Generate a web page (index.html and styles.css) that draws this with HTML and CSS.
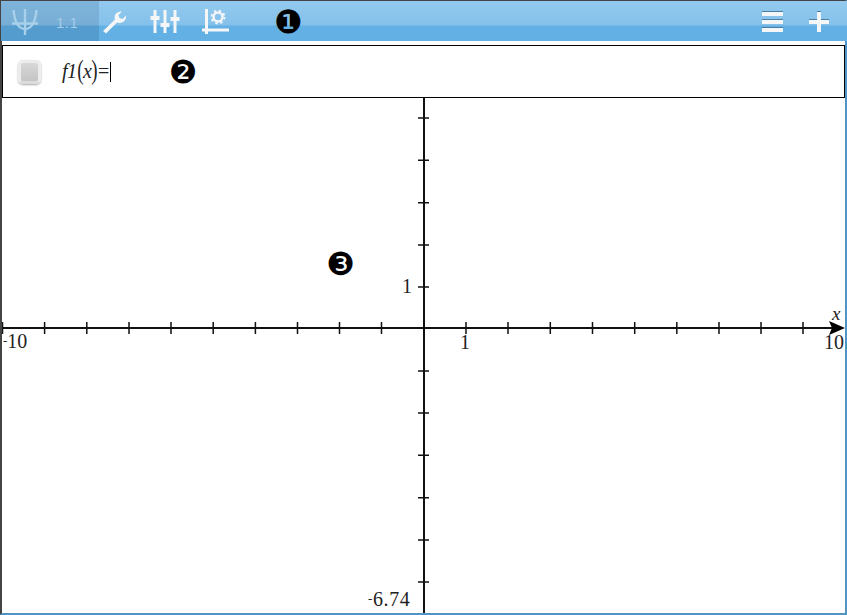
FILE: index.html
```html
<!DOCTYPE html>
<html lang="en">
<head>
<meta charset="utf-8">
<title>Graphs</title>
<link rel="stylesheet" href="styles.css">
</head>
<body>
<div class="app">
  <header class="toolbar">
    <div class="tab">
      <svg class="icon-graph" width="36" height="36" viewBox="0 0 36 36"><g fill="none" stroke="#a9d0ea" stroke-width="2.400"><path d="M6.500 6C7.500 16 11 25 18 25C25 25 28.500 16 29.500 6"/><path d="M18 5V31"/><path d="M5 19.500H31"/></g></svg>
      <span class="tab-label">1.1</span>
    </div>
    <div class="tools">
      <svg class="tool tool-wrench" width="28" height="28" viewBox="0 0 28 28"><path d="M3 24 15 12.500C13.500 8.500 16.500 4 22 4.500L18.500 8l1 3 3 1L26 8.500C26.500 14 22 17 17 15.500L6 26.500Z" fill="#f4f6f8"/></svg>
      <svg class="tool tool-sliders" width="30" height="28" viewBox="0 0 30 28" fill="#f4f6f8"><rect x="3.500" y="3" width="3" height="23"/><rect x="0.500" y="9" width="9" height="4"/><rect x="13.500" y="3" width="3" height="23"/><rect x="10.500" y="16" width="9" height="4"/><rect x="23.500" y="3" width="3" height="23"/><rect x="20.500" y="10" width="9" height="4"/></svg>
      <svg class="tool tool-axes" width="28" height="28" viewBox="0 0 28 28"><path d="M0 21.500H27V24.500H0Z" fill="#f4f6f8"/><rect x="3" y="2" width="3" height="25" fill="#f4f6f8"/><circle cx="16" cy="10" r="4.500" fill="none" stroke="#f4f6f8" stroke-width="2.500"/><circle cx="16" cy="10" r="6.500" fill="none" stroke="#f4f6f8" stroke-width="1.800" stroke-dasharray="2.500 2.600"/></svg>
    </div>
    <span class="callout callout-toolbar">&#10102;</span>
    <div class="tools-right">
      <div class="menu"><i></i><i></i><i></i></div>
      <div class="plus"></div>
    </div>
  </header>
  <div class="spacer"></div>
  <section class="entry">
    <span class="checkbox"></span>
    <span class="formula"><i>f1</i><span class="paren">(</span><i>x</i><span class="paren">)</span>=<span class="caret"></span></span>
    <span class="callout callout-entry">&#10103;</span>
  </section>
  <main class="graph">
    <svg class="plot" width="843" height="515" viewBox="2 98 843 515">
      <g class="axes">
        <path class="axis" d="M0 328H836"/>
        <path class="axis" d="M424 98V613"/>
        <path class="ticks" d="M2.500 322V334M44.600 322V334M86.800 322V334M129 322V334M171 322V334M213.200 322V334M255.400 322V334M297.500 322V334M339.500 322V334M381.500 322V334M424 322V334M466 322V334M508 322V334M550.300 322V334M592.500 322V334M634.700 322V334M676.800 322V334M719 322V334M761 322V334M803 322V334"/>
        <path class="ticks" d="M418 118H429M418 160.200H429M418 202.800H429M418 245H429M418 287H429M418 371H429M418 413H429M418 455.300H429M418 497.700H429M418 540H429M418 582H429"/>
        <path class="arrow" d="M829 321 845 328 829 335 832 328Z"/>
      </g>
      <text class="num" x="3" y="348"><tspan class="neg" dy="-3">-</tspan><tspan dy="3">10</tspan></text>
      <text class="num" x="460" y="349">1</text>
      <text class="num" x="824" y="349">10</text>
      <text class="num" x="402" y="293">1</text>
      <text class="num num-spaced" x="368" y="606"><tspan class="neg" dy="-3">-</tspan><tspan dy="3">6.74</tspan></text>
      <text class="var" x="832" y="320">x</text>
    </svg>
    <span class="callout callout-graph">&#10104;</span>
  </main>
</div>
</body>
</html>
```

FILE: styles.css
```css
* { box-sizing: border-box; }
html, body { margin: 0; padding: 0; width: 847px; height: 615px; overflow: hidden; background: #fff; }

.app {
  width: 847px;
  height: 615px;
  display: flex;
  flex-direction: column;
  border-top: 1px solid #444;
  border-left: 2px solid #444;
  border-right: 2px solid #4f94c4;
  border-bottom: 2px solid #4f94c4;
  background: #fff;
}

.toolbar {
  height: 40px;
  margin-left: -1px;
  margin-right: -2px;
  flex: none;
  display: flex;
  align-items: center;
  position: relative;
  background: linear-gradient(#93c9ee 0, #84c1ea 24px, #62b0e4 25px, #62b0e4 100%);
}

.tab {
  width: 98px;
  height: 40px;
  display: flex;
  align-items: center;
  padding-left: 6px;
  background: linear-gradient(#7fb3d9 0, #78aed6 24px, #559cce 25px, #559cce 100%);
}
.icon-graph { flex: none; margin-top: 2px; }
.tab-label {
  margin-left: 13px;
  margin-top: 2px;
  font: 15px "Liberation Sans", sans-serif;
  letter-spacing: 0.5px;
  color: #a5cce8;
}

.tools { display: flex; align-items: center; margin-left: 1px; }
.tool { flex: none; display: block; }
.tool-sliders { margin-left: 22px; }
.tool-axes { margin-left: 22px; }

.callout {
  font-family: "DejaVu Sans", sans-serif;
  font-size: 32px;
  line-height: 32px;
  color: #000;
}
.callout-toolbar { margin-left: 44px; margin-top: 1px; }

.tools-right {
  margin-left: auto;
  margin-right: 18px;
  display: flex;
  align-items: center;
  gap: 26px;
}
.menu { width: 21px; display: flex; flex-direction: column; gap: 3px; }
.menu i { display: block; height: 5px; background: #f4f6f8; border-top: 1px solid #4d7ea5; }
.plus {
  width: 20px;
  height: 21px;
  background:
    linear-gradient(#4d7ea5, #4d7ea5) 8px 0 / 4px 1px no-repeat,
    linear-gradient(#f4f6f8, #f4f6f8) 8px 0 / 4px 21px no-repeat,
    linear-gradient(#4d7ea5, #4d7ea5) 0 8px / 20px 1px no-repeat,
    linear-gradient(#f4f6f8, #f4f6f8) 0 8px / 20px 5px no-repeat;
}

.spacer { height: 4px; flex: none; }

.entry {
  height: 53px;
  flex: none;
  display: flex;
  align-items: center;
  border: 1px solid #000;
  padding-left: 15px;
}
.checkbox {
  width: 23px;
  height: 24px;
  border-radius: 5px;
  background: linear-gradient(#d8d8d8, #c4c4c4);
  border: 3px solid #ececec;
  border-bottom-color: #dcdcdc;
  box-shadow: 0 1px 2px #aaa;
}
.formula {
  margin-left: 21px;
  font: 20px "Liberation Serif", serif;
  display: flex;
  align-items: center;
  color: #222;
  letter-spacing: -0.5px;
}
.paren { font-size: 27px; line-height: 27px; margin-top: -3px; margin-left: -1px; margin-right: -1px; transform: scaleX(0.7); }
.caret { display: inline-block; width: 1px; height: 20px; background: #000; margin-left: 1px; }
.callout-entry { margin-left: 58px; }

.graph { flex: 1; position: relative; min-height: 0; }
.plot { display: block; }
.callout-graph { position: absolute; left: 324px; top: 150px; }

.axis { stroke: #111; stroke-width: 2; fill: none; }
.ticks { stroke: #111; stroke-width: 1.500; fill: none; }
.arrow { fill: #000; }
.num { font: 20px "Liberation Serif", serif; fill: #222; }
.num-spaced { letter-spacing: 0.6px; }
.neg { font-size: 13px; }
.var { font: italic 19px "Liberation Serif", serif; fill: #222; }
```
